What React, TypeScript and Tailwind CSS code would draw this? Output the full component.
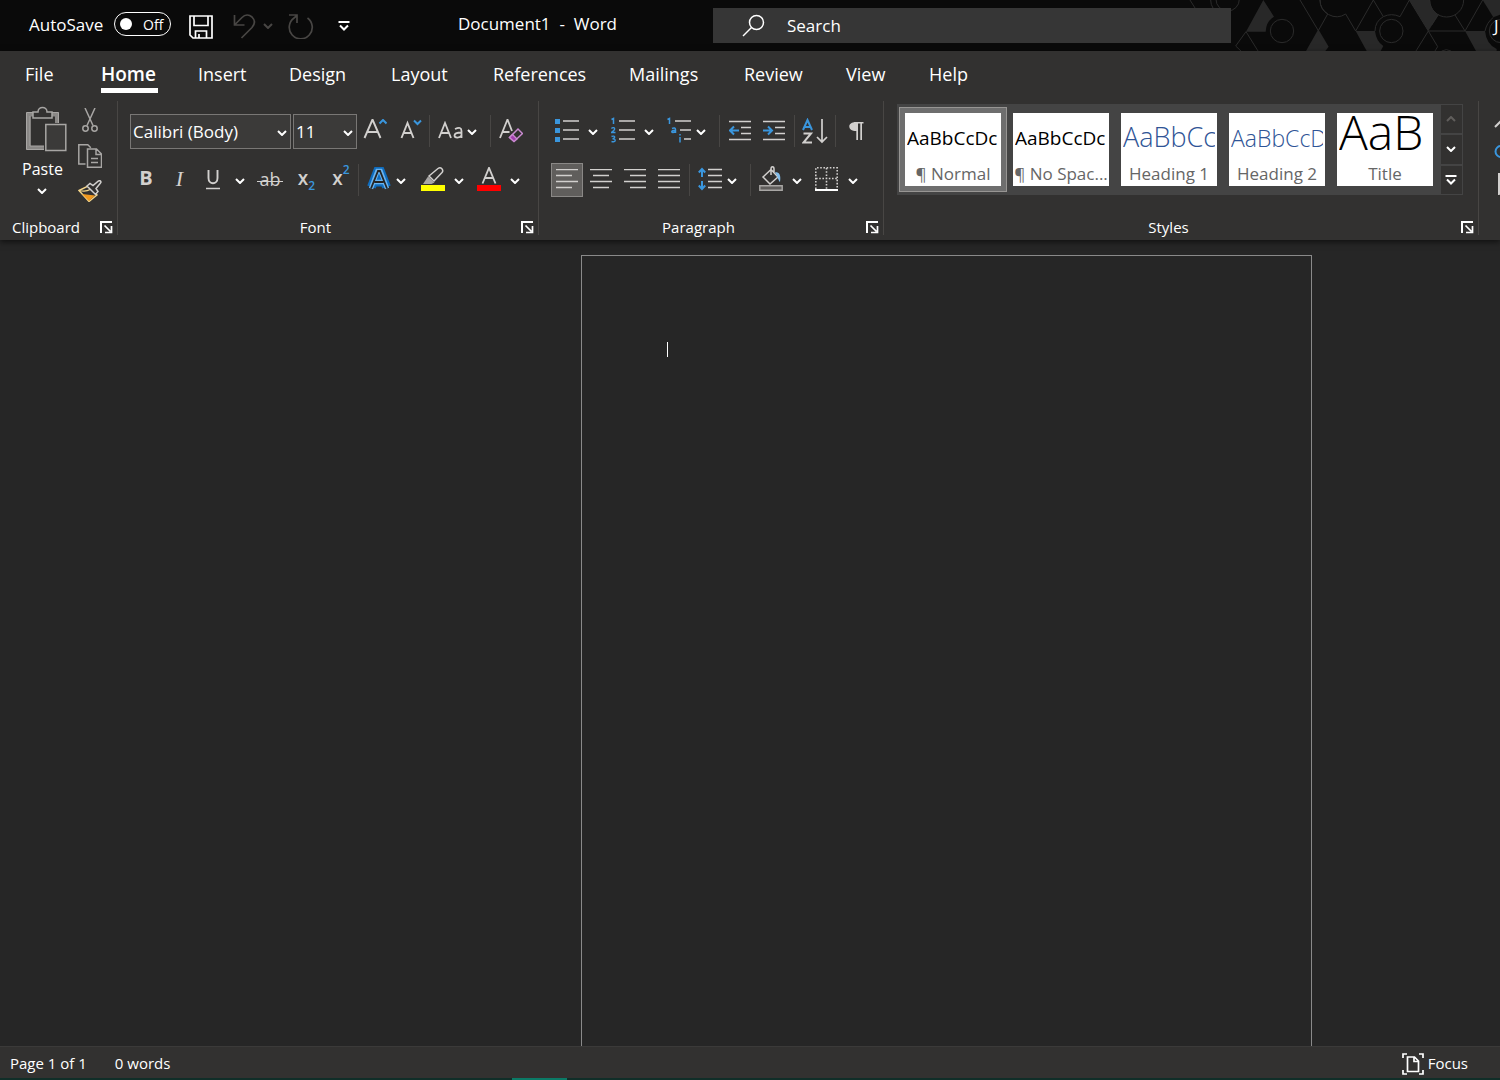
import React from "react";

const cx = (...parts: (string | undefined)[]) => parts.filter(Boolean).join(" ");

function Chevron({ className = "text-white" }: { className?: string }) {
  return (
    <svg width="10" height="6" viewBox="0 0 10 6" fill="none" className={cx("shrink-0", className)}>
      <path d="M1 1l4 4 4-4" stroke="currentColor" strokeWidth="2" />
    </svg>
  );
}

function MoreChevron() {
  return (
    <svg width="12" height="10" viewBox="0 0 12 10" fill="none" className="shrink-0">
      <path d="M0.5 1h11" stroke="#fff" strokeWidth="2" />
      <path d="M2 4.5l4 4 4-4" stroke="#fff" strokeWidth="2" />
    </svg>
  );
}

function IconButton({
  label,
  className,
  children,
}: {
  label: string;
  className?: string;
  children: React.ReactNode;
}) {
  return (
    <button
      type="button"
      aria-label={label}
      className={cx("flex h-[34px] shrink-0 items-center justify-center text-[#d2d0ce]", className)}
    >
      {children}
    </button>
  );
}

function SplitButton({
  label,
  tight,
  className,
  children,
}: {
  label: string;
  tight?: boolean;
  className?: string;
  children: React.ReactNode;
}) {
  return (
    <button
      type="button"
      aria-label={label}
      className={cx(
        "flex h-[34px] shrink-0 items-center pl-2 text-[#d2d0ce]",
        tight ? "gap-[5px]" : "gap-[9px]",
        className ?? "w-14",
      )}
    >
      <span className="mb-[2px]">{children}</span>
      <Chevron className="mt-[2px] text-white" />
    </button>
  );
}

function Divider({ className }: { className?: string }) {
  return <span className={cx("h-8 w-px shrink-0 bg-[#484644]", className)} />;
}

function Group({
  title,
  className,
  children,
}: {
  title: string;
  className?: string;
  children: React.ReactNode;
}) {
  return (
    <section aria-label={title} className={cx("flex shrink-0 flex-col border-r border-[#484644]", className)}>
      <div className="h-[118px]">{children}</div>
      <div className="flex h-4 items-center pr-1">
        <span className="flex-1 pr-2 text-center text-[15px] leading-4 text-white">{title}</span>
        <button type="button" aria-label={title + " settings"} className="shrink-0">
          <svg width="13" height="13" viewBox="0 0 13 13" fill="none" stroke="#fff">
            <path d="M1 12V1h11" strokeWidth="2" />
            <path d="M4.500 4.500l6 6M11.500 5v6.500H5" strokeWidth="1.700" />
          </svg>
        </button>
      </div>
    </section>
  );
}

function Combo({ label, value, className }: { label: string; value: string; className?: string }) {
  return (
    <div className={cx("relative mt-[2px] h-[35px] shrink-0", className)}>
      <select
        aria-label={label}
        defaultValue={value}
        className="h-full w-full appearance-none border border-[#797775] bg-[#3b3a39] pt-px pl-[2px] text-[17px] text-white"
      >
        <option>{value}</option>
      </select>
      <span className="pointer-events-none absolute top-[16px] right-1">
        <Chevron className="block text-white" />
      </span>
    </div>
  );
}

function Lines({ rows }: { rows: [number, number][] }) {
  return (
    <svg width="22" height="22" viewBox="0 2 22 22" stroke="#d2d0ce" strokeWidth="1.500">
      {rows.map(([a, b], i) => (
        <path key={i} d={`M${a} ${2.5 + i * 6}H${b}`} />
      ))}
    </svg>
  );
}

function TitlePattern() {
  return (
    <svg
      width="320"
      height="51"
      viewBox="0 0 960 153"
      className="absolute top-0 right-0"
      fill="none"
      stroke="#2b2b2b"
      strokeWidth="3"
    >
      <g fill="#282828" stroke="none">
        <path d="M250 0l32 50q-24 15-25 45h-59z" />
        <path d="M415 88l31 52-10 13h-58z" />
        <path d="M527 93h58q4 32 25 45l-8 15h-42z" />
        <path d="M688 0h62q2 30 26 45l-31 48z" />
        <path d="M908 0h52v44l-20 8z" />
        <path d="M855 93h60q4 40 35 54v6h-62z" />
      </g>
      <path d="M30 0l15 24M92 0q0 14 8 26M360 0l55 92 28-50M497 42l30 51 53-93 30 50M660 50l28-50 57 93h110l53-93M825 45l30 48" />
      <path d="M198 95l-31 43 16 15M198 95l36 58M745 93l-37 60M745 93l28 47-8 13M785 153q14-8 28 0M755 75l20-32" />
      <path d="M443 42Q420 26 420 0M420 0a50 50 0 0 0 77 42M585 93a50 50 0 0 1 25-43q24-12 50 0M749 0a50 50 0 0 0 102 0M940 52q-20 16-25 41" />
      <circle cx="143" cy="-2" r="35" />
      <circle cx="306" cy="93" r="35" />
      <circle cx="634" cy="93" r="35" />
      <circle cx="963" cy="93" r="35" />
    </svg>
  );
}

function TitleBar() {
  return (
    <header className="relative flex h-[51px] items-start overflow-hidden bg-[#0a0a0a]">
      <TitlePattern />
      <div className="flex h-12 w-[362px] shrink-0 items-center pl-[29px]">
        <label htmlFor="autosave" className="w-[85px] pt-px text-[17px]">
          AutoSave
        </label>
        <button
          id="autosave"
          type="button"
          role="switch"
          aria-checked="false"
          className="flex h-6 w-[57px] items-center gap-[11px] rounded-full border border-white pl-[5px] text-[14px]"
        >
          <span className="h-3 w-3 rounded-full bg-white" />
          Off
        </button>
        <button type="button" aria-label="Save" className="mt-[6px] ml-[18px]">
          <svg width="24" height="24" viewBox="0 0 24 24" fill="none" stroke="#fff" strokeWidth="1.700">
            <path d="M1 1h22v22H4l-3-3z" />
            <path d="M5 1v9.500h14V1M6.500 23v-7h11v7M10 19v4" />
          </svg>
        </button>
        <button type="button" aria-label="Undo" className="mt-1 ml-[20px] flex items-center gap-[7px] text-[#484644]">
          <svg width="23" height="25" viewBox="0 0 23 25" fill="none" stroke="currentColor" strokeWidth="1.700">
            <path d="M1.500 1v10h10M1.500 11L9 3.500c3-3 7-3 10-.5 3 3 3 7 0 10.500L8.500 24" />
          </svg>
          <Chevron className="text-[#484644]" />
        </button>
        <button type="button" aria-label="Redo" className="mt-1 ml-[15px]">
          <svg width="26" height="26" viewBox="0 0 26 26" fill="none" stroke="#484644" strokeWidth="1.700">
            <path d="M1 2h8v8M8.500 3L6 5a11.500 11.500 0 1 0 13.500 0" />
          </svg>
        </button>
        <button type="button" aria-label="Customize quick access" className="mt-[3px] ml-6">
          <MoreChevron />
        </button>
      </div>
      <h1 className="h-12 w-[351px] shrink-0 text-center text-[17px] leading-[48px] whitespace-pre">
        Document1{"  -  "}Word
      </h1>
      <label className="relative mt-2 flex h-[35px] flex-1 items-center bg-[#363636] pl-[29px]">
        <svg width="23" height="23" viewBox="0 0 23 23" fill="none" stroke="#fff" strokeWidth="1.500">
          <circle cx="14.500" cy="8.500" r="7" />
          <path d="M9.500 13.500L1 22" />
        </svg>
        <input
          type="text"
          aria-label="Search"
          placeholder="Search"
          className="ml-[22px] min-w-0 flex-1 bg-transparent text-[17px] text-white outline-none placeholder:text-white"
        />
      </label>
      <div className="relative flex h-[51px] w-[269px] shrink-0 items-center justify-end">
        <button type="button" className="w-[6px] text-left text-[17px]">
          J
        </button>
      </div>
    </header>
  );
}

const TABS = [
  ["File", "w-9"],
  ["Home", "w-[57px]"],
  ["Insert", "w-[51px]"],
  ["Design", "w-[62px]"],
  ["Layout", "w-[62px]"],
  ["References", "w-24"],
  ["Mailings", "w-[75px]"],
  ["Review", "w-[62px]"],
  ["View", "w-[43px]"],
  ["Help", "w-[43px]"],
];

function Tabs() {
  return (
    <nav aria-label="Ribbon tabs" className="flex h-[50px] items-start gap-10 pl-[25px]">
      {TABS.map(([t, w]) => (
        <button
          key={t}
          type="button"
          className={cx(
            "flex h-[42px] items-center border-b-[5px] pt-[9px] whitespace-nowrap",
            w,
            t === "Home" ? "border-white text-[19px] font-semibold" : "border-transparent text-[18px]",
          )}
        >
          {t}
        </button>
      ))}
    </nav>
  );
}

function Clipboard() {
  return (
    <Group title="Clipboard" className="w-[118px]">
      <div className="flex pt-[5px] pl-[21px]">
        <button type="button" className="flex w-[43px] flex-col items-center text-[16px]">
          <svg width="42" height="46" viewBox="0 0 42 46" fill="none" className="ml-[6px] shrink-0">
            <path d="M8 8.500H3.500V42H19M27 8.500h5V17" stroke="#8a8886" strokeWidth="4" />
            <path d="M8 6.500H1.500V43.500H19M26 6.500h7.500V17M5 10v30h14" stroke="#a8a6a4" strokeWidth="1" />
            <path d="M8 12V6h5c0-6 9-6 9 0h5v6z" fill="#323130" stroke="#a8a6a4" strokeWidth="1.500" />
            <path d="M20.800 18.500h20v26h-20z" fill="#3b3a39" stroke="#a8a6a4" strokeWidth="1.500" />
          </svg>
          <span className="mt-[5px] leading-6">Paste</span>
          <span className="mt-[7px] mr-px">
            <Chevron className="block text-white" />
          </span>
        </button>
        <div className="flex w-[52px] flex-col items-center">
          <button type="button" aria-label="Cut" className="flex h-[27px] items-center justify-center">
            <svg width="16" height="24" viewBox="0 0 16 24" fill="none" stroke="#a8a6a4" strokeWidth="1.500">
              <path d="M3 0l8 17.500M13 0L5 17.500" />
              <circle cx="3.500" cy="20.500" r="2.700" />
              <circle cx="12.500" cy="20.500" r="2.700" />
            </svg>
          </button>
          <button type="button" aria-label="Copy" className="mt-1 flex h-[38px] items-center justify-center">
            <svg width="24" height="24" viewBox="0 0 24 24" fill="none" stroke="#a8a6a4" strokeWidth="1.500">
              <path d="M7.500 20H.8V.8h9l3 3" />
              <path d="M9.500 5h9l5 5v13.200h-14zM18 5v5.500h5.500M13 14.500h7M13 18.500h7" />
            </svg>
          </button>
          <button type="button" aria-label="Format painter" className="flex h-8 items-center justify-center">
            <svg width="24" height="22" viewBox="0 0 24 22" fill="none">
              <path d="M1 10.500L10 6l9 9-8 6.500z" fill="#323130" stroke="#f4d58a" strokeWidth="1.400" />
              <path d="M4 14l13 1.500-6 5.500z" fill="#f0981f" />
              <path d="M1 10.500c5 1 8 1 11-1" stroke="#f4d58a" strokeWidth="1.200" />
              <path
                d="M9 6l3-2.500 3 2L20.500 1c2-1 3 1 2 2L18 8.500l2 3-2.500 3z"
                fill="#323130"
                stroke="#d2d0ce"
                strokeWidth="1.500"
              />
            </svg>
          </button>
        </div>
      </div>
    </Group>
  );
}

function FontGroup() {
  return (
    <Group title="Font" className="w-[421px]">
      <div className="flex flex-col gap-[15px] pt-3 pl-3">
        <div className="flex h-[35px] items-center">
          <Combo label="Font name" value="Calibri (Body)" className="w-[161px]" />
          <Combo label="Font size" value="11" className="ml-[2px] w-16" />
          <IconButton label="Increase font size" className="w-9">
            <svg width="24" height="24" viewBox="0 0 24 24" fill="none">
              <path d="M1.500 19L9.500.5 17.500 19M4.500 13h10" stroke="#d2d0ce" strokeWidth="1.900" />
              <path d="M16.500 4.500L20 1l3.500 3.500" stroke="#3a96dd" strokeWidth="2" />
            </svg>
          </IconButton>
          <IconButton label="Decrease font size" className="w-9">
            <svg width="22" height="24" viewBox="0 0 22 24" fill="none">
              <path d="M1.500 19L7.500 4l6 15M3.500 14h8" stroke="#d2d0ce" strokeWidth="1.900" />
              <path d="M14 1.500L17.500 5 21 1.500" stroke="#3a96dd" strokeWidth="2" />
            </svg>
          </IconButton>
          <Divider />
          <button
            type="button"
            aria-label="Change case"
            className="flex h-[34px] w-[60px] shrink-0 items-center gap-1 pl-2"
          >
            <svg width="25" height="20" viewBox="0 0 25 20" fill="none" stroke="#d2d0ce" strokeWidth="1.800">
              <path d="M1 17L7 2l6 15M3 12h8" />
              <path d="M17 8q6.500-3 6.500 2v7M23.500 11.500c-4 0-7 .5-7 3s5 3 7 0" />
            </svg>
            <Chevron className="mt-[2px] text-white" />
          </button>
          <Divider />
          <IconButton label="Clear formatting" className="w-10">
            <svg width="24" height="24" viewBox="0 0 24 24" fill="none">
              <path d="M1 19L8.500.5 13 12M3.500 13h7" stroke="#d2d0ce" strokeWidth="1.800" />
              <path d="M10.500 18.500L19 10l4.500 4.500-8.500 8z" fill="#323130" stroke="#c98ad0" strokeWidth="1.500" />
              <path d="M10.500 18.500l3-3 4.500 4.500-3 2.500z" fill="#a33eb0" stroke="#c98ad0" strokeWidth="1.300" />
            </svg>
          </IconButton>
        </div>
        <div className="flex items-center">
          <IconButton label="Bold" className="w-8 pb-1 text-[20px] font-bold">
            B
          </IconButton>
          <IconButton label="Italic" className="w-[35px] pb-[3px] font-['Liberation_Serif',serif] text-[22px] italic">
            I
          </IconButton>
          <IconButton label="Underline" className="w-8">
            <svg width="14" height="22" viewBox="0 0 14 22" fill="none" stroke="#d2d0ce" strokeWidth="1.900">
              <path d="M2.500 1v8c0 7 9 7 9 0V1" />
              <path d="M0 19.500h14" strokeWidth="1.500" />
            </svg>
          </IconButton>
          <IconButton label="Underline style" className="w-[22px] pt-[2px]">
            <Chevron />
          </IconButton>
          <IconButton label="Strikethrough" className="w-[38px] pb-[2px]">
            <span className="relative text-[18px]">
              ab
              <span className="absolute top-[15px] -right-[2px] -left-[2px] h-px bg-[#d2d0ce]" />
            </span>
          </IconButton>
          <IconButton label="Subscript" className="w-[35px] pb-1 text-[19px] font-semibold">
            x<span className="mt-4 text-[12px]/[14px] text-[#3a96dd]">2</span>
          </IconButton>
          <IconButton label="Superscript" className="w-[34px] pb-1 text-[19px] font-semibold">
            x<span className="mb-4 text-[12px]/[14px] text-[#3a96dd]">2</span>
          </IconButton>
          <Divider />
          <SplitButton label="Text effects" tight className="w-[54px]">
            <svg width="24" height="24" viewBox="0 0 24 24" fill="none">
              <path d="M4.500 20L10.500 4.500h3L19.500 20M7.500 15h9" stroke="#0f6cbd" strokeWidth="9" />
              <path d="M4 21.500L10.500 4h3L20 21.500M7.500 15h9" stroke="#6cb4ee" strokeWidth="4.500" />
              <path d="M4 21.500L11 4h2l7 17.500M7.500 15h9" stroke="#252423" strokeWidth="1.800" />
            </svg>
          </SplitButton>
          <SplitButton label="Text highlight color">
            <svg width="24" height="24" viewBox="0 0 24 24" fill="none">
              <path d="M0 18h24v6H0z" fill="#ff0" />
              <path d="M8 9L17 1.500c3-2 6 1.500 4 4L13 14z" stroke="#d2d0ce" strokeWidth="1.500" />
              <path d="M7 9.500l6.500 6-3 1.500H2z" fill="#a8a6a4" />
            </svg>
          </SplitButton>
          <SplitButton label="Font color">
            <svg width="24" height="24" viewBox="0 0 24 24" fill="none">
              <path d="M0 18h24v6H0z" fill="#f00" />
              <path d="M5.500 16.500L12 .8l6.500 15.700M8 11h8" stroke="#d2d0ce" strokeWidth="1.800" />
            </svg>
          </SplitButton>
        </div>
      </div>
    </Group>
  );
}

function ListIcon({ kind }: { kind: "bullets" | "numbers" | "levels" }) {
  const level = kind === "levels";
  return (
    <svg width="24" height="26" viewBox="0 0 24 26" fill="none">
      <path
        d={level ? "M8 4h16M13 13h11M17 22h7" : "M8 4h16M8 13h16M8 22h16"}
        stroke="#d2d0ce"
        strokeWidth="1.700"
      />
      {kind === "bullets" && <path d="M0 2h5v5H0zM0 11h5v5H0zM0 20h5v5H0z" fill="#3a96dd" />}
      {kind !== "bullets" && <path d="M.5 2.500l2-1V7" stroke="#3a96dd" strokeWidth="1.500" />}
      {kind === "numbers" && (
        <g stroke="#3a96dd" strokeWidth="1.400">
          <path d="M.5 11.500c1-1.500 3.500-1 3 .8-.3 1.200-2 2.200-3 3.200h4" />
          <path d="M.5 19.500c4-1.500 4 2 1 2.200 4 0 3.500 4-1 2.800" />
        </g>
      )}
      {level && (
        <path
          d="M5 11.500c2-1 3.500-.5 3.500 1V16M8.500 13.300c-5-.2-5 3.500 0 1.500M13 20v5.500M13 17v1.500"
          stroke="#3a96dd"
          strokeWidth="1.500"
        />
      )}
    </svg>
  );
}

function IndentIcon({ out }: { out?: boolean }) {
  return (
    <svg width="22" height="22" viewBox="0 0 22 22" fill="none">
      <path d="M0 1.500h22M12 7.500h10M12 13.500h10M0 19.500h22" stroke="#d2d0ce" strokeWidth="1.600" />
      <path d={out ? "M10 10.500H1M5 6.500l-4 4 4 4" : "M0 10.500h9M5 6.500l4 4-4 4"} stroke="#3a96dd" strokeWidth="2" />
    </svg>
  );
}

function Paragraph() {
  return (
    <Group title="Paragraph" className="w-[345px]">
      <div className="flex flex-col gap-[15px] pt-3">
        <div className="flex h-[35px] items-center pl-2">
          <SplitButton label="Bullets"><ListIcon kind="bullets" /></SplitButton>
          <SplitButton label="Numbering"><ListIcon kind="numbers" /></SplitButton>
          <SplitButton label="Multilevel list" tight><ListIcon kind="levels" /></SplitButton>
          <Divider className="mr-[3px] ml-1" />
          <IconButton label="Decrease indent" className="w-[34px]"><IndentIcon out /></IconButton>
          <IconButton label="Increase indent" className="w-[34px]"><IndentIcon /></IconButton>
          <Divider className="mx-[3px]" />
          <IconButton label="Sort" className="w-[34px]">
            <svg width="26" height="26" viewBox="0 0 26 26" fill="none" strokeWidth="2">
              <path d="M1 12L5.500 2 10 12M3 9h5" stroke="#3a96dd" />
              <path d="M1.500 15.500H9L1.500 24.500H10" stroke="#d2d0ce" />
              <path d="M20 1v23M15 19l5 5 5-5" stroke="#d2d0ce" strokeWidth="1.700" />
            </svg>
          </IconButton>
          <Divider className="mx-[3px]" />
          <IconButton label="Show paragraph marks" className="w-[34px]">
            <svg width="15" height="20" viewBox="0 0 15 20" fill="#d2d0ce">
              <path d="M7 1h7.500v1.500H13V19h-1.700V2.500H9V19H7.300v-9C-2 10-2 1 7 1z" />
            </svg>
          </IconButton>
        </div>
        <div className="flex items-center pl-3">
          <IconButton label="Align left" className="w-8 border border-[#8a8886] bg-[#605e5c]">
            <Lines rows={[[0, 22], [0, 16], [0, 22], [0, 16]]} />
          </IconButton>
          <IconButton label="Center" className="ml-px w-[34px]">
            <Lines rows={[[0, 22], [3, 19], [0, 22], [3, 19]]} />
          </IconButton>
          <IconButton label="Align right" className="w-[34px]">
            <Lines rows={[[0, 22], [6, 22], [0, 22], [6, 22]]} />
          </IconButton>
          <IconButton label="Justify" className="w-[34px]">
            <Lines rows={[[0, 22], [0, 22], [0, 22], [0, 22]]} />
          </IconButton>
          <Divider className="ml-[3px]" />
          <SplitButton label="Line spacing" tight className="w-[60px]">
            <svg width="24" height="24" viewBox="0 0 24 24" fill="none">
              <path d="M10 2.500h14M10 8.500h14M10 14.500h14M10 20.500h14" stroke="#d2d0ce" strokeWidth="1.600" />
              <path d="M4 2v8M.8 5.500L4 2l3.200 3.500M4 14v8M.8 18.500L4 22l3.200-3.500" stroke="#3a96dd" strokeWidth="2" />
            </svg>
          </SplitButton>
          <Divider />
          <SplitButton label="Shading">
            <svg width="24" height="26" viewBox="0 0 24 26" fill="none">
              <path d="M.8 19.800h22.400v4.400H.8z" fill="#605e5c" stroke="#a8a6a4" strokeWidth="1.400" />
              <path d="M4 11L12 3.500l7 7.500-8 7zM12 9V3c0-3 3-3 3 0v3" stroke="#d2d0ce" strokeWidth="1.500" />
              <path d="M16 6c5 0 6 4 5 10-2-2-2-5-5-10z" fill="#83beec" />
            </svg>
          </SplitButton>
          <SplitButton label="Borders">
            <svg width="24" height="24" viewBox="0 0 24 24" fill="none" stroke="#d2d0ce">
              <path d="M.8 22V.8h21.400V22M11.500 1v21M1 11.500h21" strokeWidth="1.600" strokeDasharray="1.600 1.600" />
              <path d="M0 23h23" stroke="#fff" strokeWidth="2" />
            </svg>
          </SplitButton>
        </div>
      </div>
    </Group>
  );
}

const STYLES = [
  { name: "¶ Normal", sample: "AaBbCcDc", cls: "text-[19px]/[44px] text-black" },
  { name: "¶ No Spac...", sample: "AaBbCcDc", cls: "text-[19px]/[44px] text-black" },
  { name: "Heading 1", sample: "AaBbCcD", cls: "text-[27px]/[42px] font-light text-[#2f5496]" },
  { name: "Heading 2", sample: "AaBbCcD", cls: "text-[23px]/[44px] font-light text-[#2f5496]" },
  { name: "Title", sample: "AaB", cls: "text-[48px]/[32px] font-light text-black" },
];

function Styles() {
  return (
    <Group title="Styles" className="w-[595px]">
      <div className="pt-[3px] pl-[13px]">
        <div className="flex h-[91px] w-[566px] bg-[#444] pl-[2px]">
          {STYLES.map((s, i) => (
            <button
              key={s.name}
              type="button"
              className={cx(
                "mt-[3px] flex h-[85px] w-[108px] shrink-0 border p-[5px]",
                i === 0 ? "border-[#979593] bg-[#6e6e6e]" : "border-transparent",
              )}
            >
              <span className="flex h-[73px] w-full flex-col bg-white">
                <span
                  className={cx(
                    "mx-[2px] mt-[3px] block h-[45px] shrink-0 overflow-hidden text-left whitespace-nowrap",
                    s.cls,
                  )}
                >
                  {s.sample}
                </span>
                <span className="text-center text-[17px] leading-[25px] whitespace-nowrap text-[#666]">{s.name}</span>
              </span>
            </button>
          ))}
          <div className="flex w-6 flex-col gap-[2px] py-px pr-px pl-[2px]">
            <button type="button" aria-label="Previous styles" className="flex flex-1 items-center justify-center bg-[#323130] pr-px">
              <span className="rotate-180"><Chevron className="text-[#605e5c]" /></span>
            </button>
            <button type="button" aria-label="Next styles" className="flex flex-1 items-center justify-center bg-[#323130] pr-px">
              <Chevron />
            </button>
            <button type="button" aria-label="More styles" className="flex flex-1 items-center justify-center bg-[#323130] pr-px">
              <MoreChevron />
            </button>
          </div>
        </div>
      </div>
    </Group>
  );
}

function Editing() {
  return (
    <section aria-label="Editing" className="flex flex-1 flex-col items-start gap-3 overflow-hidden pt-4 pl-[15px]">
      <button type="button" aria-label="Find">
        <svg width="20" height="16" viewBox="0 0 20 16" fill="none" stroke="#d2d0ce" strokeWidth="2">
          <path d="M1 10l7-7" />
        </svg>
      </button>
      <button type="button" aria-label="Replace">
        <svg width="20" height="16" viewBox="0 0 20 16" fill="none" stroke="#3a96dd" strokeWidth="2">
          <circle cx="7" cy="6.500" r="5.500" />
        </svg>
      </button>
      <button type="button" aria-label="Select">
        <svg width="20" height="22" viewBox="0 0 20 22" fill="none" stroke="#d2d0ce" strokeWidth="2">
          <path d="M5 0v21l10-6z" />
        </svg>
      </button>
    </section>
  );
}

export default function App() {
  return (
    <div className="flex min-h-screen flex-col overflow-hidden bg-[#262626] font-['Open_Sans',sans-serif] text-white">
      <TitleBar />
      <div className="relative bg-[#323130] shadow-[0_2px_6px_rgba(0,0,0,0.6)]">
        <Tabs />
        <div className="flex h-[139px] items-start overflow-hidden">
          <Clipboard />
          <FontGroup />
          <Paragraph />
          <Styles />
          <Editing />
        </div>
      </div>
      <main className="flex flex-1 pt-[15px] pl-[581px]">
        <article
          aria-label="Document page"
          className="w-[731px] border border-b-0 border-[#8a8a8a] bg-[#262626] pt-[86px] pl-[85px]"
        >
          <div className="h-[15px] w-px bg-white" />
        </article>
      </main>
      <footer className="border-t border-[#3b3a39] bg-[#323130]">
        <div className="flex h-[31px] items-center pt-[2px] pr-8 pl-[10px] text-[15px]">
          <button type="button" className="mr-7">Page 1 of 1</button>
          <button type="button">0 words</button>
          <button type="button" className="ml-auto flex items-center gap-1">
            <svg width="22" height="22" viewBox="0 0 22 22" fill="none" stroke="#fff" strokeWidth="1.700">
              <path d="M1 5V1h4M17 1h4v4M21 17v4h-4M5 21H1v-4" />
              <path d="M5.500 4h7l4 4v10.500h-11zM12 4v4.500h4.500" />
            </svg>
            Focus
          </button>
        </div>
        <div className="h-[2px] bg-[#102e28] pl-[512px]">
          <div className="h-full w-[55px] bg-[#0b7a66]" />
        </div>
      </footer>
    </div>
  );
}
